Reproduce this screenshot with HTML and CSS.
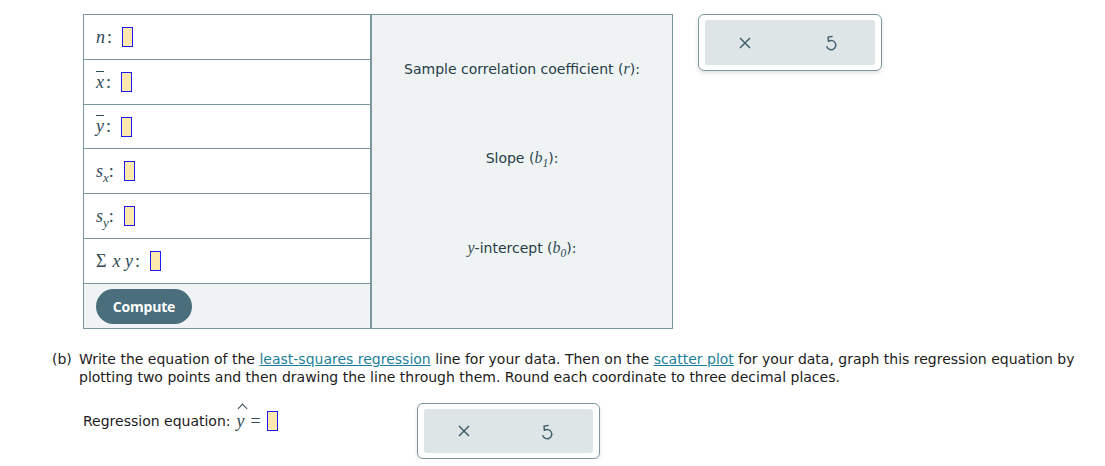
FILE: index.html
```html
<!DOCTYPE html>
<html>
<head>
<meta charset="utf-8">
<link rel="stylesheet" href="styles.css">
</head>
<body>
<div class="top">
  <div class="grid">
    <div class="inputs">
      <div class="row"><span class="m">n</span><span class="colon">:</span><span class="box"></span></div>
      <div class="row"><span class="m bar">x</span><span class="colon">:</span><span class="box"></span></div>
      <div class="row"><span class="m bar">y</span><span class="colon">:</span><span class="box"></span></div>
      <div class="row"><span class="m">s<sub>x</sub></span><span class="colon tight">:</span><span class="box"></span></div>
      <div class="row"><span class="m">s<sub>y</sub></span><span class="colon tight">:</span><span class="box"></span></div>
      <div class="row"><span class="m up">Σ</span><span class="m">x y</span><span class="colon">:</span><span class="box"></span></div>
      <div class="comp"><button class="btn">Compute</button></div>
    </div>
    <div class="results">
      <div class="res">Sample correlation coefficient (<span class="m">r</span>):</div>
      <div class="res">Slope (<span class="m">b<sub>1</sub></span>):</div>
      <div class="res"><span class="m">y</span>-intercept (<span class="m">b<sub>0</sub></span>):</div>
    </div>
  </div>
  <div class="tools">
    <div class="tools-in">
      <svg width="14" height="14" viewBox="0 0 14 14"><path d="M2 2 L12 12 M12 2 L2 12" stroke="#3f5f6b" stroke-width="1.5" fill="none"/></svg>
      <svg width="13" height="17" viewBox="0 0 13 17"><path d="M8.2 2.4 L4 3.2 L4.4 7.4 A4.6 4.6 0 1 1 2.8 12.6" stroke="#3f5f6b" stroke-width="1.4" fill="none" stroke-linejoin="round" stroke-linecap="round"/></svg>
    </div>
  </div>
</div>
<div class="partb">
  <span class="lbl">(b)</span>
  <p class="q">Write the equation of the <a href="#">least-squares regression</a> line for your data. Then on the <a href="#">scatter plot</a> for your data, graph this regression equation by plotting two points and then drawing the line through them. Round each coordinate to three decimal places.</p>
</div>
<div class="bottom">
  <div class="eq">Regression equation: <span class="m hat">y</span><span class="eqs">=</span><span class="box"></span></div>
  <div class="tools small">
    <div class="tools-in">
      <svg width="14" height="14" viewBox="0 0 14 14"><path d="M2 2 L12 12 M12 2 L2 12" stroke="#3f5f6b" stroke-width="1.5" fill="none"/></svg>
      <svg width="13" height="17" viewBox="0 0 13 17"><path d="M8.2 2.4 L4 3.2 L4.4 7.4 A4.6 4.6 0 1 1 2.8 12.6" stroke="#3f5f6b" stroke-width="1.4" fill="none" stroke-linejoin="round" stroke-linecap="round"/></svg>
    </div>
  </div>
</div>
</body>
</html>
```
FILE: styles.css
```css
* { box-sizing: border-box; }
body {
  margin: 0;
  background: #fff;
  font-family: "DejaVu Sans", Verdana, sans-serif;
  font-size: 14px;
  color: #1c1c1c;
}
.top {
  display: flex;
  align-items: flex-start;
  padding: 14px 0 0 83px;
}
.grid {
  display: flex;
  width: 590px;
  height: 315px;
  border: 1px solid #7a989e;
  background: #eff3f4;
}
.inputs {
  width: 288px;
  display: flex;
  flex-direction: column;
  border-right: 2px solid #7a989e;
}
.row {
  height: 45px;
  background: #fff;
  border-bottom: 1px solid #7a989e;
  display: flex;
  align-items: center;
  padding-left: 12px;
  font-family: "Liberation Serif", "DejaVu Serif", serif;
  font-size: 18px;
  color: #2f4b56;
}
.row:nth-child(3) { height: 44px; }
.m {
  font-family: "Liberation Serif", "DejaVu Serif", serif;
  font-style: italic;
  color: #2f4b56;
}
.m sub { font-size: 0.72em; vertical-align: -0.35em; line-height: 0; }
.up { font-style: normal; margin-right: 6px; }
.bar { text-decoration: overline; text-decoration-thickness: 1px; }
.colon { margin-left: 2px; margin-right: 10px; }
.colon.tight { margin-left: 0; }
.box {
  display: inline-block;
  width: 11px;
  height: 20px;
  background: #fde9ad;
  border: 1.5px solid #1c1cf0;
}
.comp {
  flex: 1;
  display: flex;
  align-items: center;
  padding-left: 12px;
}
.btn {
  height: 35px;
  width: 96px;
  border: none;
  border-radius: 18px;
  background: #4a6e7c;
  color: #fff;
  font-family: "Open Sans", Lato, sans-serif;
  font-weight: 700;
  font-size: 14px;
  letter-spacing: -0.2px;
  padding: 0;
}
.results {
  flex: 1;
  display: flex;
  flex-direction: column;
  align-items: center;
  padding-top: 45px;
  color: #263d47;
}
.res { height: 90px; line-height: 18px; }
.res:nth-child(2) { height: 92px; }
.res .m { font-size: 16px; }
.tools {
  margin-left: 25px;
  width: 184px;
  height: 57px;
  border: 1px solid #7a989e;
  border-radius: 6px;
  padding: 5px 6px;
  box-shadow: 0 2px 4px rgba(0,0,0,0.12);
}
.tools-in {
  height: 100%;
  background: #dde5e7;
  border-radius: 3px;
  display: flex;
  align-items: center;
  justify-content: space-between;
  padding: 0 38px 0 33px;
}
.partb {
  display: flex;
  padding: 21px 20px 0 52px;
}
.lbl { width: 27px; flex: none; line-height: 18px; }
.q { margin: 0; line-height: 18px; }
.q a { color: #1e7f9a; }
.bottom {
  display: flex;
  align-items: flex-start;
  padding: 17px 0 0 83px;
}
.eq {
  width: 334px;
  display: flex;
  align-items: center;
  height: 36px;
}
.eq .hat {
  font-size: 18px;
  margin-left: 6px;
  position: relative;
}
.eq .hat::before {
  content: "";
  position: absolute;
  left: 2px;
  top: -6px;
  width: 6px;
  height: 6px;
  border-left: 1.3px solid #2f4b56;
  border-top: 1.3px solid #2f4b56;
  transform: rotate(45deg);
}
.eqs { font-family: "Liberation Serif", serif; font-size: 18px; margin: 0 6px 0 6px; color: #2f4b56; }
.tools.small { margin-left: 0; width: 183px; height: 56px; }
.tools.small .tools-in { padding: 0 40px 0 33px; }
```
